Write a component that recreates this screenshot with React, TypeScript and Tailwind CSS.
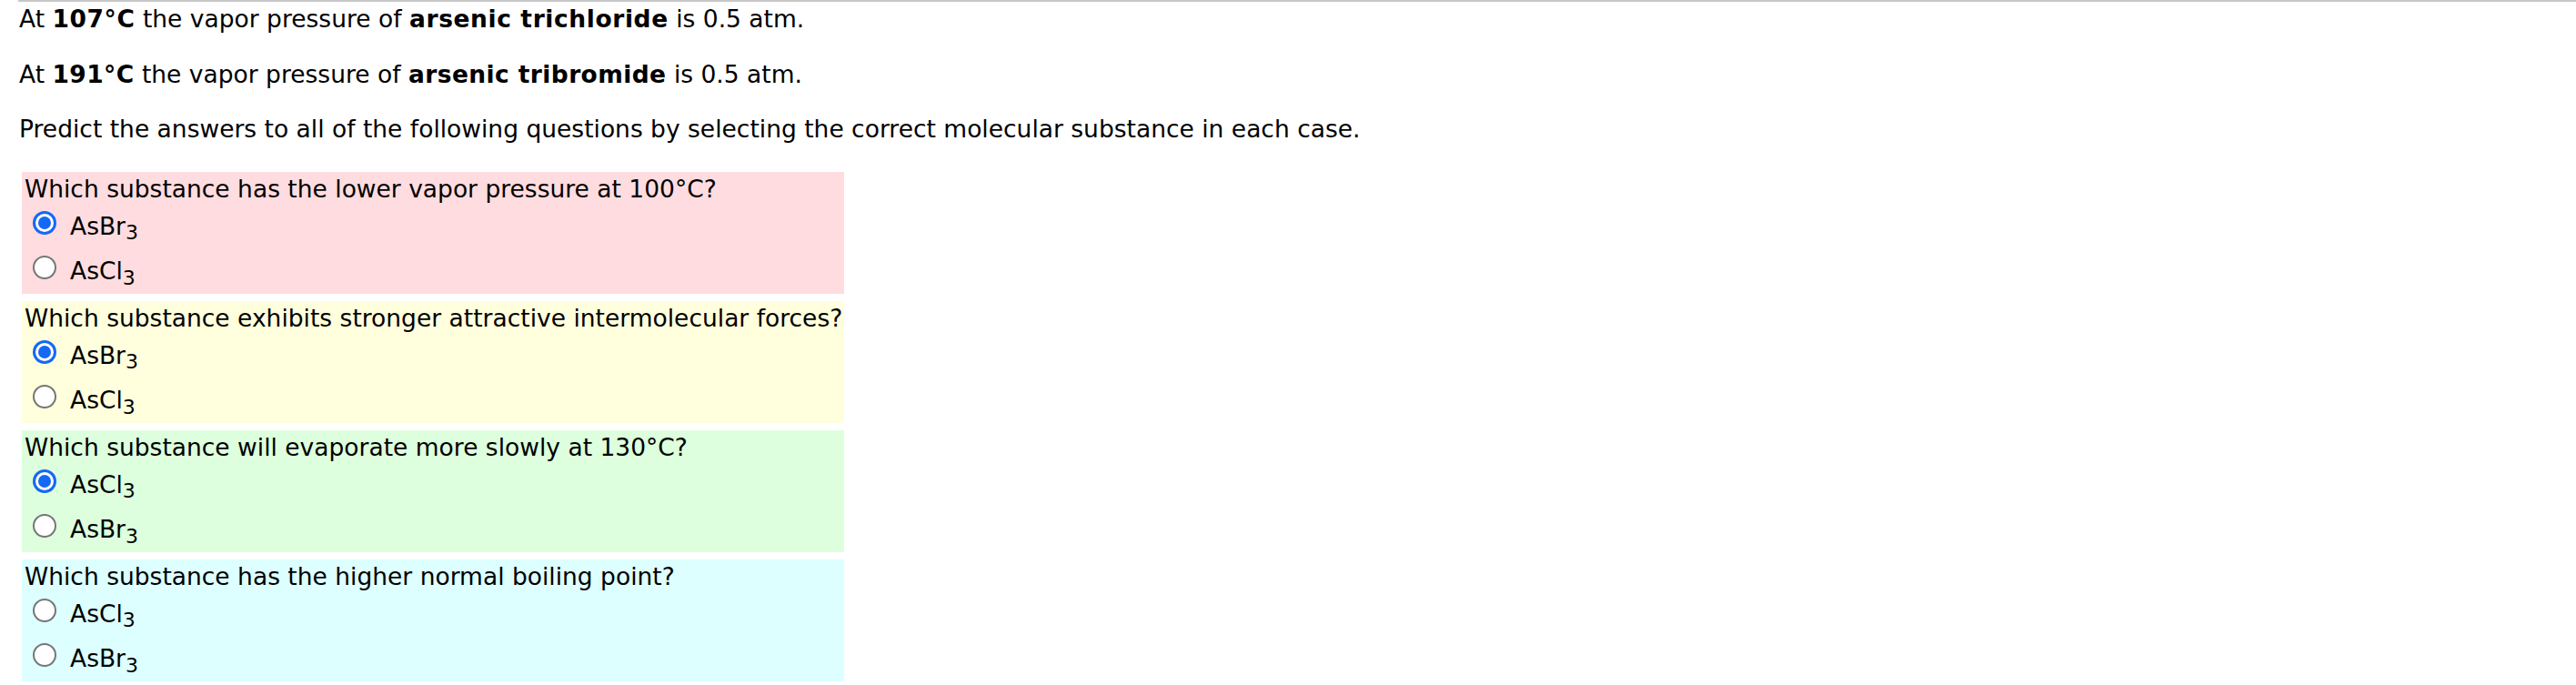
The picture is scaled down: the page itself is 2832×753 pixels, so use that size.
import React from "react";

const font = { fontFamily: '"DejaVu Sans", Verdana, sans-serif' };

function Radio({ checked }: { checked: boolean }) {
  return (
    <svg width="26" height="26" viewBox="0 0 26 26" className="shrink-0 mt-[5px]">
      {checked ? (
        <>
          <circle cx="13" cy="13" r="13" fill="#1668f4" />
          <circle cx="13" cy="13" r="10" fill="#ffffff" />
          <circle cx="13" cy="13" r="7" fill="#1668f4" />
        </>
      ) : (
        <circle cx="13" cy="13" r="12" fill="#ffffff" stroke="#767676" strokeWidth="2" />
      )}
    </svg>
  );
}

function Formula({ base }: { base: string }) {
  return (
    <span>
      {base}
      <span className="relative top-[5.5px] text-[22px] leading-none">3</span>
    </span>
  );
}

type Q = { q: string; bg: string; a: { f: string; checked: boolean }[] };

const questions: Q[] = [
  {
    q: "Which substance has the lower vapor pressure at 100°C?",
    bg: "bg-[#ffdcdf]",
    a: [
      { f: "AsBr", checked: true },
      { f: "AsCl", checked: false },
    ],
  },
  {
    q: "Which substance exhibits stronger attractive intermolecular forces?",
    bg: "bg-[#ffffdd]",
    a: [
      { f: "AsBr", checked: true },
      { f: "AsCl", checked: false },
    ],
  },
  {
    q: "Which substance will evaporate more slowly at 130°C?",
    bg: "bg-[#ddffdd]",
    a: [
      { f: "AsCl", checked: true },
      { f: "AsBr", checked: false },
    ],
  },
  {
    q: "Which substance has the higher normal boiling point?",
    bg: "bg-[#ddffff]",
    a: [
      { f: "AsCl", checked: false },
      { f: "AsBr", checked: false },
    ],
  },
];

export default function App() {
  return (
    <div className="w-[2832px] h-[753px] bg-white overflow-hidden text-black" style={font}>
      <div className="ml-[20px] border-t-2 border-[#c8c8c8] pl-[1px] text-[26.5px]">
        <p className="leading-[37.5px]">
          At <b className="tracking-[0.6px]">107°C</b> the vapor pressure of{" "}
          <b className="tracking-[0.6px]">arsenic trichloride</b> is 0.5 atm.
        </p>
        <p className="leading-[37.5px] mt-[23px]">
          At <b className="tracking-[0.4px]">191°C</b> the vapor pressure of{" "}
          <b className="tracking-[0.4px]">arsenic tribromide</b> is 0.5 atm.
        </p>
        <p className="leading-[37.5px] mt-[23px] whitespace-nowrap">
          Predict the answers to all of the following questions by selecting the correct molecular substance in each case.
        </p>
        <div className="mt-[28.5px] ml-[3px] flex flex-col gap-[8.5px]">
          {questions.map((q, i) => (
            <div key={i} className={`w-[904px] h-[133.5px] ${q.bg} pl-[3px]`}>
              <div className="leading-[37.5px] whitespace-nowrap">{q.q}</div>
              <div className="flex flex-col gap-[6.5px]">
                {q.a.map((a, j) => (
                  <div key={j} className="flex items-start h-[43px] leading-[43px] pl-[9px]">
                    <Radio checked={a.checked} />
                    <span className="ml-[15px]">
                      <Formula base={a.f} />
                    </span>
                  </div>
                ))}
              </div>
            </div>
          ))}
        </div>
      </div>
    </div>
  );
}
